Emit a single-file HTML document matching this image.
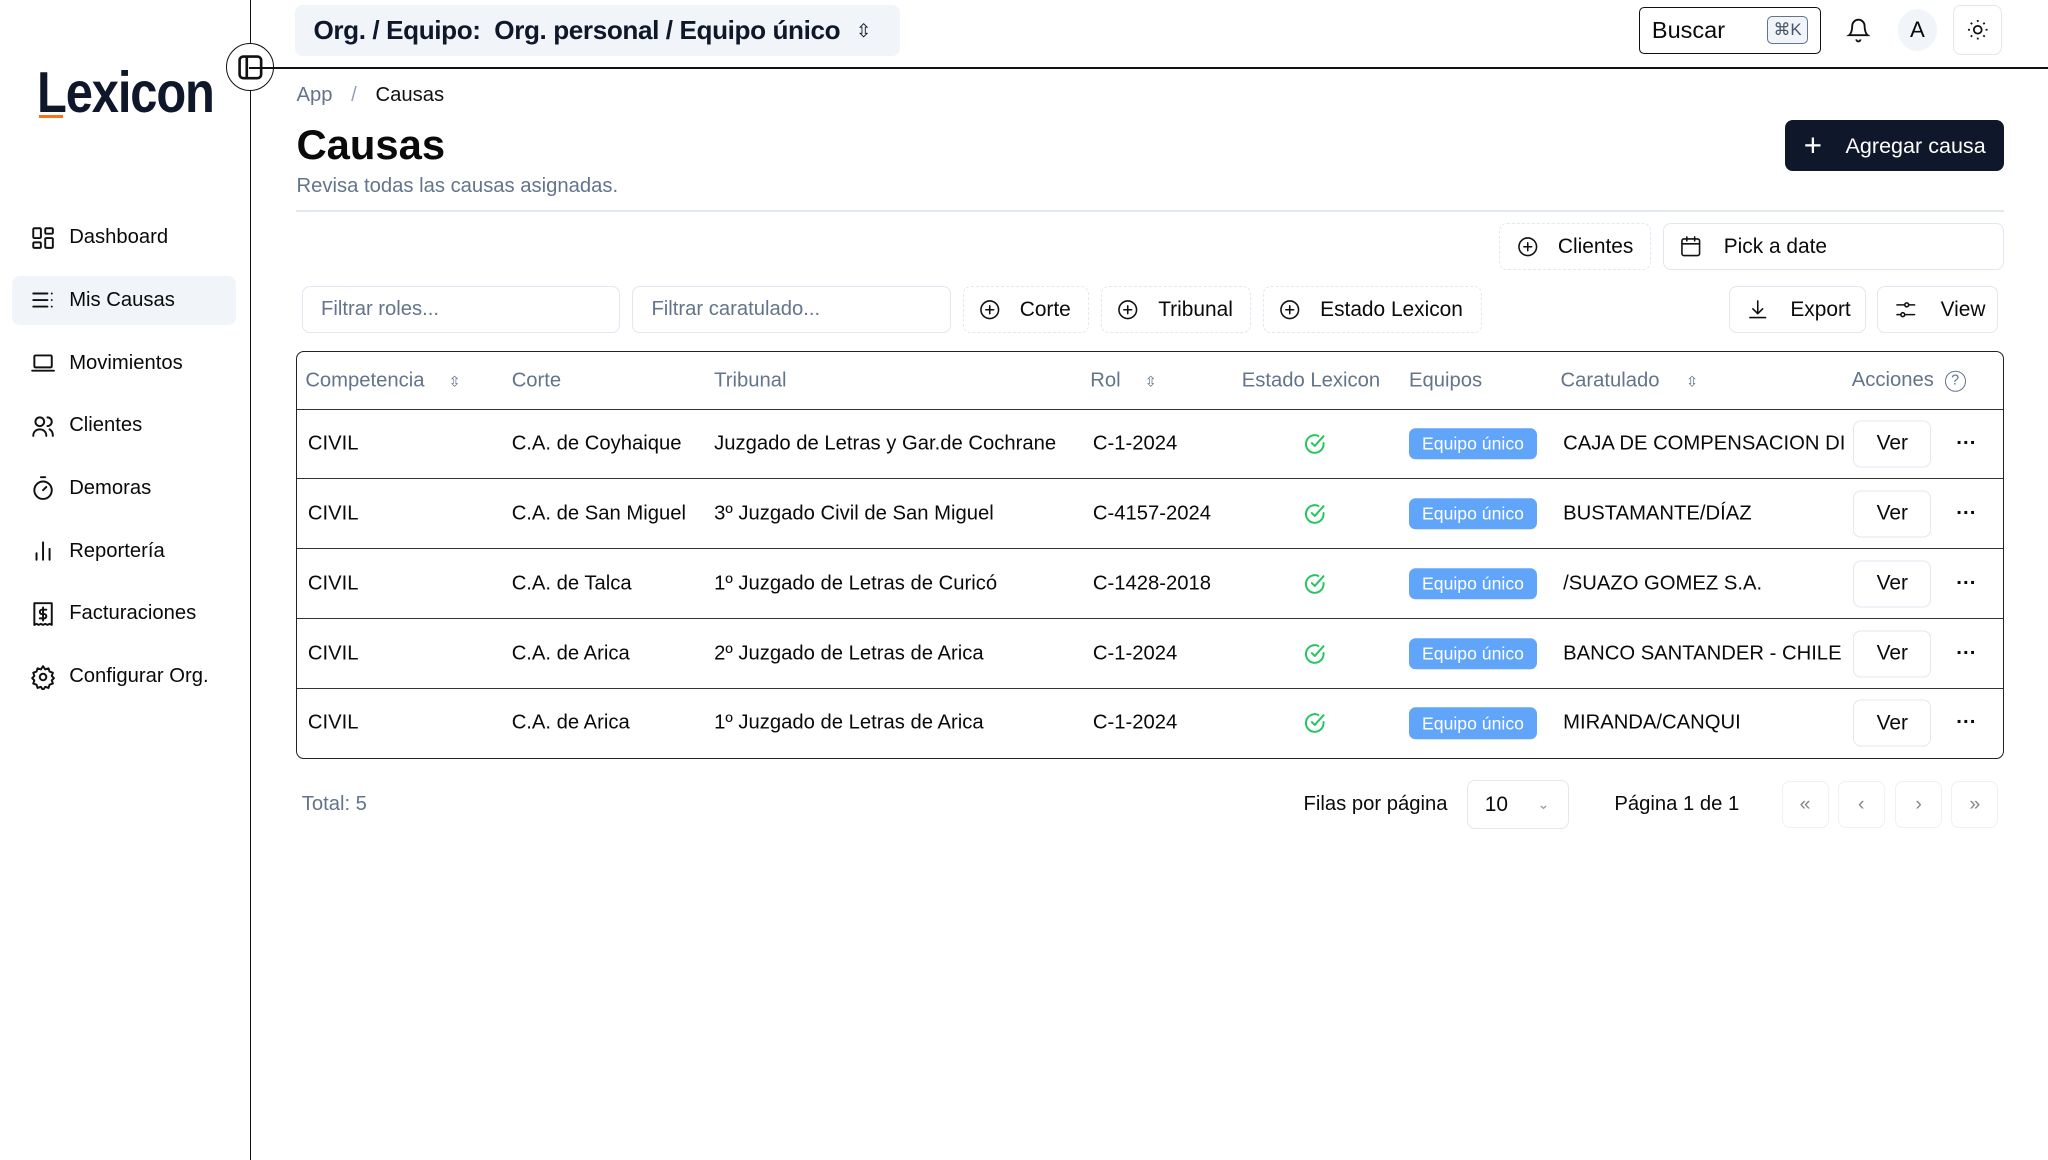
<!DOCTYPE html>
<html><head><meta charset="utf-8">
<style>
html{zoom:1.306122}
*{box-sizing:border-box;margin:0;padding:0}
body{width:1568px;height:888px;overflow:hidden;background:#fff;font-family:"Liberation Sans",sans-serif;color:#0a0a0a;position:relative}
.a{position:absolute}
.side{left:0;top:0;width:192px;height:888px;border-right:1.5px solid #111}
.logo{left:28px;top:46px;font-size:44px;font-weight:bold;color:#0f172a;transform:scaleX(.85);transform-origin:left;letter-spacing:-1px}
.nav{left:9px;width:172px;height:38px;display:flex;align-items:center;padding-left:14px;font-size:15.5px;gap:10px;border-radius:6px}
.nav svg{width:20px;height:20px;fill:none;stroke:#111;stroke-width:1.8;stroke-linecap:round;stroke-linejoin:round}
.btn{border:1px solid #e2e8f0;border-radius:6px;display:flex;align-items:center;font-size:16px;background:#fff}
.dash{border:1.5px dashed #e2e8f0}
.btn svg{width:18px;height:18px;fill:none;stroke:#111;stroke-width:1.6;stroke-linecap:round;stroke-linejoin:round}
.inp{border:1px solid #e2e8f0;border-radius:6px;font-size:15.5px;color:#64748b;padding-left:14px;display:flex;align-items:center}
.tbl{left:227px;top:269px;width:1307px;height:312px;border:1.5px solid #222;border-radius:6px;overflow:hidden}
.row{position:absolute;left:0;width:100%;border-top:1.5px solid #333;height:53.5px;font-size:15.5px}
.row span{position:absolute;top:50%;transform:translateY(-50%);white-space:nowrap}
.hd span{position:absolute;top:50%;transform:translateY(-50%);color:#64748b;font-size:15.5px;white-space:nowrap}
.badge{background:#60a5fa;color:#fff;font-size:13.5px;padding:4px 10px;border-radius:5px}
.ver{width:60px;height:36px;border:1px solid #e2e8f0;border-radius:6px;display:flex;align-items:center;justify-content:center;font-size:16px;background:#fff}
.pg{width:36px;height:36px;border:1px solid #eef1f5;border-radius:6px;display:flex;align-items:center;justify-content:center;color:#888;font-size:15px}
.ck{left:770px;width:18px;height:18px}
</style></head><body>
<div class="a side"></div>
<div class="a logo">Lexicon</div>
<div class="a" style="left:30px;top:88px;width:18px;height:2px;background:#f97316"></div>
<div class="a" style="left:173px;top:33px;width:37px;height:37px;border:1.5px solid #111;border-radius:50%;background:#fff;display:flex;align-items:center;justify-content:center"><svg width="22" height="22" viewBox="0 0 24 24" fill="none" stroke="#111" stroke-width="2.2"><rect x="3" y="3" width="18" height="18" rx="3"/><path d="M9 3v18"/></svg></div>

<div class="a nav" style="top:163px"><svg viewBox="0 0 24 24"><rect x="3" y="3" width="7" height="9" rx="1"/><rect x="14" y="3" width="7" height="5" rx="1"/><rect x="14" y="12" width="7" height="9" rx="1"/><rect x="3" y="16" width="7" height="5" rx="1"/></svg>Dashboard</div>
<div class="a nav" style="top:211px;background:#f1f5f9"><svg viewBox="0 0 24 24"><path d="M3 6h13M3 12h13M3 18h13M20 6h.01M20 12h.01M20 18h.01"/></svg>Mis Causas</div>
<div class="a nav" style="top:259px"><svg viewBox="0 0 24 24"><rect x="4" y="5" width="16" height="11" rx="1"/><path d="M2 19h20"/></svg>Movimientos</div>
<div class="a nav" style="top:307px"><svg viewBox="0 0 24 24"><circle cx="9" cy="8" r="4"/><path d="M3 21c0-4 3-6 6-6s6 2 6 6M16 4a4 4 0 0 1 0 8M21 21c0-3-1-5-3-6"/></svg>Clientes</div>
<div class="a nav" style="top:355px"><svg viewBox="0 0 24 24"><circle cx="12" cy="14" r="8"/><path d="M10 2h4M12 14l3-3"/></svg>Demoras</div>
<div class="a nav" style="top:403px"><svg viewBox="0 0 24 24"><path d="M6 20v-6M12 20V4M18 20v-10"/></svg>Reportería</div>
<div class="a nav" style="top:451px"><svg viewBox="0 0 24 24"><path d="M4 2h16v20l-2-1-2 1-2-1-2 1-2-1-2 1-2-1-2 1z"/><path d="M15 8h-4a2 2 0 0 0 0 4h2a2 2 0 0 1 0 4H9M12 6v12"/></svg>Facturaciones</div>
<div class="a nav" style="top:499px"><svg viewBox="0 0 24 24"><circle cx="12" cy="12" r="3"/><path d="M12 2l2 3 3-1 1 3 3 1-1 3 2 2-2 2 1 3-3 1-1 3-3-1-2 3-2-3-3 1-1-3-3-1 1-3-2-2 2-2-1-3 3-1 1-3 3 1z"/></svg>Configurar Org.</div>

<div class="a" style="left:226px;top:4px;width:463px;height:39px;background:#f1f5f9;border-radius:6px;display:flex;align-items:center;padding-left:14px;font-size:20px;font-weight:bold;color:#0f172a;letter-spacing:-0.3px">Org. / Equipo:&nbsp; Org. personal / Equipo único<span style="margin-left:12px;font-size:14px;font-weight:normal">⇳</span></div>
<div class="a" style="left:191px;top:51px;width:1377px;height:1.5px;background:#111"></div>
<div class="a" style="left:1255px;top:5px;width:139px;height:36px;border:1.3px solid #111;border-radius:4px;display:flex;align-items:center;padding-left:9px;font-size:18px">Buscar<span style="margin-left:auto;margin-right:9px;border:1px solid #64748b;background:#f1f5f9;color:#475569;font-size:13px;padding:2px 4px;border-radius:4px">⌘K</span></div>
<svg class="a" style="left:1413px;top:13px" width="19" height="20" viewBox="0 0 24 24" fill="none" stroke="#111" stroke-width="1.8"><path d="M6 8a6 6 0 0 1 12 0c0 7 3 9 3 9H3s3-2 3-9M10 21a2 2 0 0 0 4 0"/></svg>
<div class="a" style="left:1453px;top:7px;width:30px;height:32px;border-radius:50%;background:#f1f5f9;display:flex;align-items:center;justify-content:center;font-size:17px">A</div>
<div class="a" style="left:1495px;top:4px;width:38px;height:38px;border:1px solid #e2e8f0;border-radius:6px;display:flex;align-items:center;justify-content:center"><svg width="18" height="18" viewBox="0 0 24 24" fill="none" stroke="#111" stroke-width="1.8"><circle cx="12" cy="12" r="4"/><path d="M12 2v2M12 20v2M4.9 4.9l1.4 1.4M17.7 17.7l1.4 1.4M2 12h2M20 12h2M4.9 19.1l1.4-1.4M17.7 6.3l1.4-1.4"/></svg></div>

<div class="a" style="left:227px;top:64px;font-size:15.5px;color:#64748b">App <span style="margin:0 10px;color:#94a3b8">/</span> <span style="color:#111">Causas</span></div>
<div class="a" style="left:227px;top:93px;font-size:32px;font-weight:bold">Causas</div>
<div class="a" style="left:227px;top:134px;font-size:15.5px;color:#64748b">Revisa todas las causas asignadas.</div>
<div class="a" style="left:1367px;top:92px;width:167px;height:39px;background:#0f172a;border-radius:6px;color:#fff;display:flex;align-items:center;padding-left:14px;font-size:16.5px"><span style="font-size:24px;font-weight:300;margin-right:18px">+</span>Agregar causa</div>
<div class="a" style="left:227px;top:161px;width:1307px;height:1.5px;background:#e2e8f0"></div>

<div class="a btn dash" style="left:1148px;top:171px;width:116px;height:36px;padding-left:12px;gap:14px"><svg viewBox="0 0 24 24"><circle cx="12" cy="12" r="9"/><path d="M8 12h8M12 8v8"/></svg>Clientes</div>
<div class="a btn" style="left:1273px;top:171px;width:261px;height:36px;padding-left:12px;gap:16px"><svg viewBox="0 0 24 24"><rect x="3" y="4" width="18" height="17" rx="2"/><path d="M3 9h18M8 2v4M16 2v4"/></svg>Pick a date</div>

<div class="a inp" style="left:231px;top:219px;width:244px;height:36px">Filtrar roles...</div>
<div class="a inp" style="left:484px;top:219px;width:244px;height:36px">Filtrar caratulado...</div>
<div class="a btn dash" style="left:737px;top:219px;width:97px;height:36px;padding-left:11px;gap:14px"><svg viewBox="0 0 24 24"><circle cx="12" cy="12" r="9"/><path d="M8 12h8M12 8v8"/></svg>Corte</div>
<div class="a btn dash" style="left:843px;top:219px;width:115px;height:36px;padding-left:11px;gap:14px"><svg viewBox="0 0 24 24"><circle cx="12" cy="12" r="9"/><path d="M8 12h8M12 8v8"/></svg>Tribunal</div>
<div class="a btn dash" style="left:967px;top:219px;width:168px;height:36px;padding-left:11px;gap:14px"><svg viewBox="0 0 24 24"><circle cx="12" cy="12" r="9"/><path d="M8 12h8M12 8v8"/></svg>Estado Lexicon</div>
<div class="a btn" style="left:1324px;top:219px;width:105px;height:36px;padding-left:12px;gap:16px"><svg viewBox="0 0 24 24"><path d="M12 3v13M7 11l5 5 5-5M4 20h16"/></svg>Export</div>
<div class="a btn" style="left:1437px;top:219px;width:93px;height:36px;padding-left:12px;gap:18px"><svg viewBox="0 0 24 24"><path d="M3 7h8M15 7h6M3 17h4M11 17h10"/><circle cx="13" cy="7" r="2"/><circle cx="9" cy="17" r="2"/></svg>View</div>

<div class="a tbl">
 <div class="hd" style="position:absolute;left:0;top:0;width:100%;height:44px">
  <span style="left:6px">Competencia <span style="position:static;font-size:11px;margin-left:14px">⇳</span></span>
  <span style="left:164px">Corte</span>
  <span style="left:319px">Tribunal</span>
  <span style="left:607px">Rol <span style="position:static;font-size:11px;margin-left:14px">⇳</span></span>
  <span style="left:723px">Estado Lexicon</span>
  <span style="left:851px">Equipos</span>
  <span style="left:967px">Caratulado <span style="position:static;font-size:11px;margin-left:16px">⇳</span></span>
  <span style="left:1190px">Acciones <span style="position:static;display:inline-block;width:16px;height:16px;border:1.3px solid #64748b;border-radius:50%;font-size:11px;text-align:center;line-height:14px;margin-left:4px;transform:translateY(-1px)">?</span></span>
 </div>
 <div class="row" style="top:43px"><span style="left:8px">CIVIL</span><span style="left:164px">C.A. de Coyhaique</span><span style="left:319px">Juzgado de Letras y Gar.de Cochrane</span><span style="left:609px">C-1-2024</span><span class="ck"><svg width="18" height="18" viewBox="0 0 24 24" fill="none" stroke="#22c55e" stroke-width="2" stroke-linecap="round" stroke-linejoin="round"><path d="M21 11v1a9 9 0 1 1-5.3-8.2"/><path d="M21 4 12 14l-3-3"/></svg></span><span style="left:851px" class="badge">Equipo único</span><span style="left:969px">CAJA DE COMPENSACION DI</span><span style="left:1191px" class="ver">Ver</span><span style="left:1270px;font-weight:bold">···</span></div>
 <div class="row" style="top:96.5px"><span style="left:8px">CIVIL</span><span style="left:164px">C.A. de San Miguel</span><span style="left:319px">3º Juzgado Civil de San Miguel</span><span style="left:609px">C-4157-2024</span><span class="ck"><svg width="18" height="18" viewBox="0 0 24 24" fill="none" stroke="#22c55e" stroke-width="2" stroke-linecap="round" stroke-linejoin="round"><path d="M21 11v1a9 9 0 1 1-5.3-8.2"/><path d="M21 4 12 14l-3-3"/></svg></span><span style="left:851px" class="badge">Equipo único</span><span style="left:969px">BUSTAMANTE/DÍAZ</span><span style="left:1191px" class="ver">Ver</span><span style="left:1270px;font-weight:bold">···</span></div>
 <div class="row" style="top:150px"><span style="left:8px">CIVIL</span><span style="left:164px">C.A. de Talca</span><span style="left:319px">1º Juzgado de Letras de Curicó</span><span style="left:609px">C-1428-2018</span><span class="ck"><svg width="18" height="18" viewBox="0 0 24 24" fill="none" stroke="#22c55e" stroke-width="2" stroke-linecap="round" stroke-linejoin="round"><path d="M21 11v1a9 9 0 1 1-5.3-8.2"/><path d="M21 4 12 14l-3-3"/></svg></span><span style="left:851px" class="badge">Equipo único</span><span style="left:969px">/SUAZO GOMEZ S.A.</span><span style="left:1191px" class="ver">Ver</span><span style="left:1270px;font-weight:bold">···</span></div>
 <div class="row" style="top:203.5px"><span style="left:8px">CIVIL</span><span style="left:164px">C.A. de Arica</span><span style="left:319px">2º Juzgado de Letras de Arica</span><span style="left:609px">C-1-2024</span><span class="ck"><svg width="18" height="18" viewBox="0 0 24 24" fill="none" stroke="#22c55e" stroke-width="2" stroke-linecap="round" stroke-linejoin="round"><path d="M21 11v1a9 9 0 1 1-5.3-8.2"/><path d="M21 4 12 14l-3-3"/></svg></span><span style="left:851px" class="badge">Equipo único</span><span style="left:969px">BANCO SANTANDER - CHILE</span><span style="left:1191px" class="ver">Ver</span><span style="left:1270px;font-weight:bold">···</span></div>
 <div class="row" style="top:257px"><span style="left:8px">CIVIL</span><span style="left:164px">C.A. de Arica</span><span style="left:319px">1º Juzgado de Letras de Arica</span><span style="left:609px">C-1-2024</span><span class="ck"><svg width="18" height="18" viewBox="0 0 24 24" fill="none" stroke="#22c55e" stroke-width="2" stroke-linecap="round" stroke-linejoin="round"><path d="M21 11v1a9 9 0 1 1-5.3-8.2"/><path d="M21 4 12 14l-3-3"/></svg></span><span style="left:851px" class="badge">Equipo único</span><span style="left:969px">MIRANDA/CANQUI</span><span style="left:1191px" class="ver">Ver</span><span style="left:1270px;font-weight:bold">···</span></div>
</div>

<div class="a" style="left:231px;top:607px;font-size:15.5px;color:#64748b">Total: 5</div>
<div class="a" style="left:998px;top:607px;font-size:15.5px">Filas por página</div>
<div class="a" style="left:1123px;top:597px;width:78px;height:38px;border:1px solid #e2e8f0;border-radius:6px;display:flex;align-items:center;padding-left:13px;font-size:16px">10<span style="margin-left:auto;margin-right:14px;color:#999;font-size:11px">⌄</span></div>
<div class="a" style="left:1236px;top:607px;font-size:15.5px">Página 1 de 1</div>
<div class="a pg" style="left:1364px;top:598px">«</div>
<div class="a pg" style="left:1407px;top:598px">‹</div>
<div class="a pg" style="left:1451px;top:598px">›</div>
<div class="a pg" style="left:1494px;top:598px">»</div>
</body></html>
